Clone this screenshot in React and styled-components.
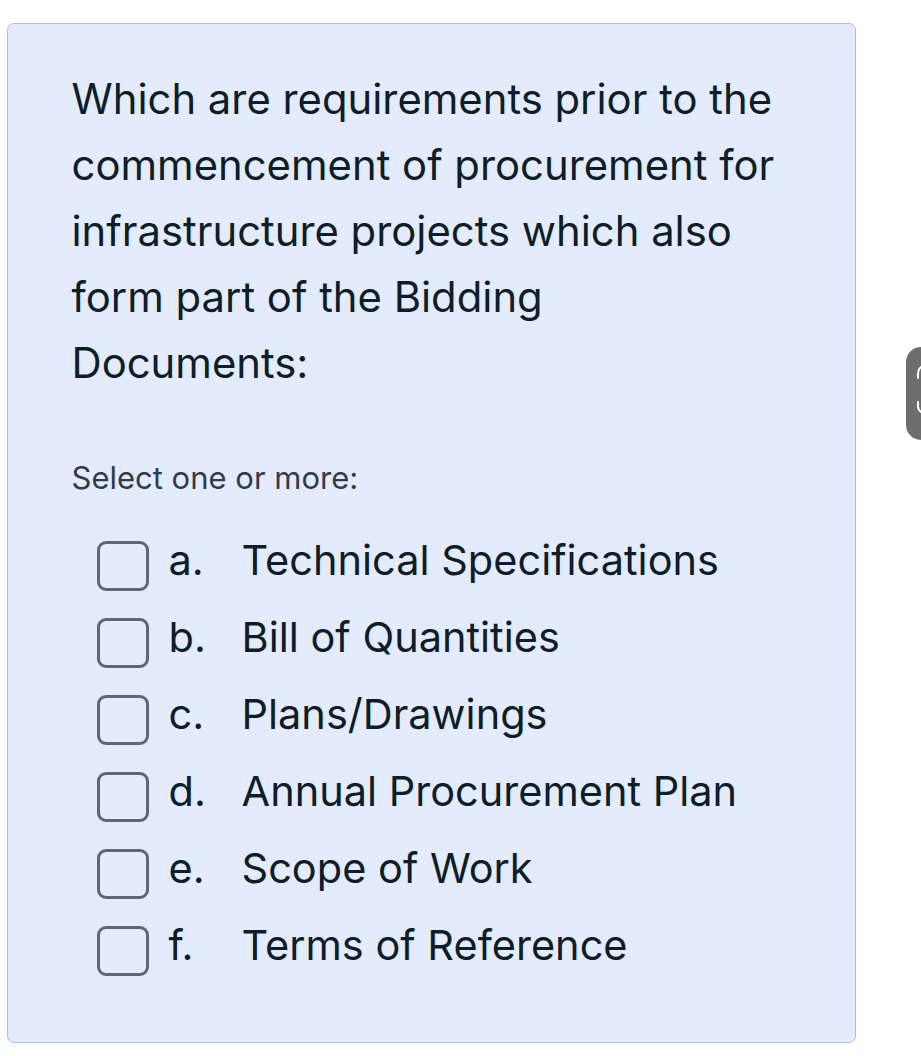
import React from "react";
import styled, { createGlobalStyle } from "styled-components";

const Global = createGlobalStyle`
  html, body { margin: 0; padding: 0; background: #ffffff; }
  body { font-family: Inter, "Noto Sans", sans-serif; }
`;

const Page = styled.div`
  position: relative;
  width: 921px;
  height: 1056px;
  padding: 23px 0 0 7px;
  box-sizing: border-box;
  overflow: hidden;
`;

const Card = styled.div`
  width: 849px;
  height: 1020px;
  box-sizing: border-box;
  background: #e3ebfd;
  border: 1.5px solid #a8bfe6;
  border-radius: 7px;
  padding: 42px 40px 0 63.5px;
`;

const Question = styled.div`
  max-width: 708px;
  font-size: 41.8px;
  line-height: 66px;
  color: #0d1e28;
`;

const Prompt = styled.div`
  margin-top: 62px;
  font-size: 31px;
  line-height: 40px;
  color: #323b4a;
`;

const Options = styled.div`
  margin-top: 36px;
  padding-left: 25px;
  display: flex;
  flex-direction: column;
  gap: 25px;
`;

const Row = styled.label`
  display: flex;
  align-items: center;
  height: 52px;
  font-size: 41.5px;
  color: #0d1e28;
`;

const Box = styled.span`
  width: 52px;
  height: 50px;
  box-sizing: border-box;
  border: 3px solid #5d6579;
  border-radius: 9px;
  flex: none;
  margin-right: 20px;
  position: relative;
  top: 6px;
`;

const Letter = styled.span`
  width: 73px;
  flex: none;
`;

const Handle = styled.div`
  position: absolute;
  left: 906px;
  top: 347px;
  width: 40px;
  height: 93px;
  border-radius: 15px;
  background: #6d6d6d;
`;

const items = [
  ["a.", "Technical Specifications"],
  ["b.", "Bill of Quantities"],
  ["c.", "Plans/Drawings"],
  ["d.", "Annual Procurement Plan"],
  ["e.", "Scope of Work"],
  ["f.", "Terms of Reference"],
];

export default function App() {
  return (
    <Page>
      <Global />
      <Card>
        <Question>
          Which are requirements prior to the commencement of procurement for
          infrastructure projects which also form part of the Bidding
          Documents:
        </Question>
        <Prompt>Select one or more:</Prompt>
        <Options>
          {items.map(([l, t]) => (
            <Row key={l}>
              <Box />
              <Letter>{l}</Letter>
              <span>{t}</span>
            </Row>
          ))}
        </Options>
      </Card>
      <Handle>
        <svg width="15" height="93" viewBox="0 0 15 93" style={{ display: "block" }}>
          <path d="M15 20 Q12 22 12 28 L12 31" stroke="#fff" strokeWidth="2" fill="none" strokeLinecap="round" />
          <path d="M12 55 L12 59 Q12 63 15 65" stroke="#fff" strokeWidth="2" fill="none" strokeLinecap="round" />
        </svg>
      </Handle>
    </Page>
  );
}
